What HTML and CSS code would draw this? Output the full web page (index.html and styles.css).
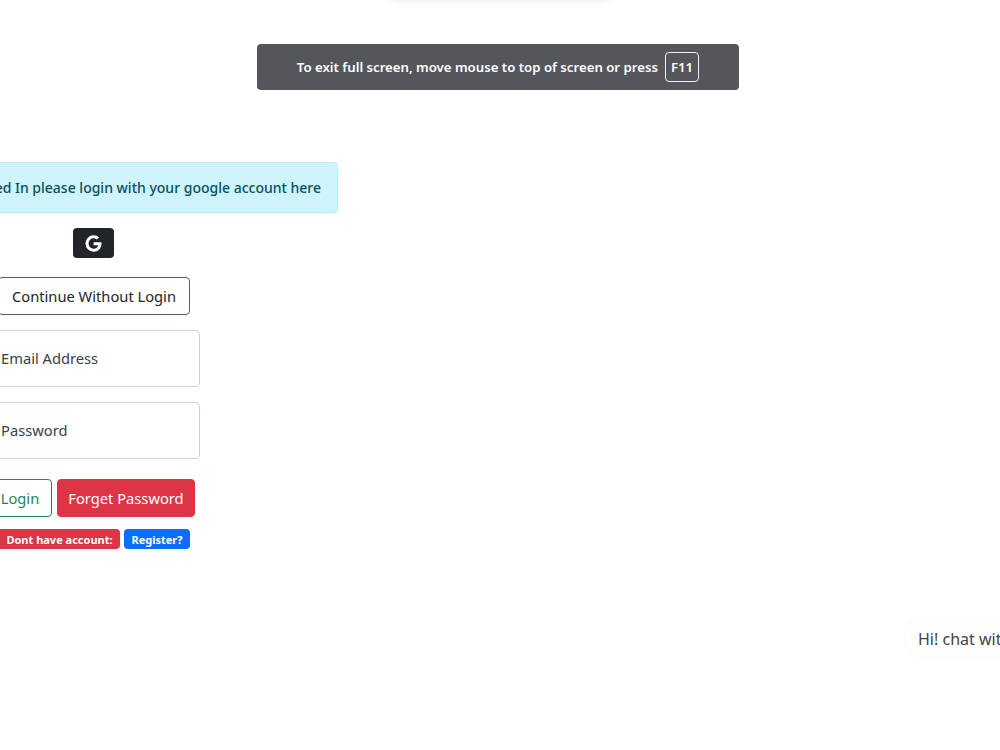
FILE: index.html
```html
<!DOCTYPE html>
<html lang="en">
<head>
    <meta charset="UTF-8">
    <title>Login</title>
    <link rel="stylesheet" href="styles.css">
</head>
<body>
<div class="top-shadow"></div>
<div class="fs-notice">
  <span>To exit full screen, move mouse to top of screen or press</span>
  <span class="key">F11</span>
</div>

<main class="login-col">
  <div class="alert-info">You are not Logged In please login with your google account here</div>

  <a class="btn-google" href="#" aria-label="Google">
    <svg width="17" height="17" viewBox="0 0 16 16">
      <path fill="#fff" d="M15.5 8.2c0 4.4-3 7.5-7.4 7.5A7.7 7.7 0 0 1 8.1.3c2.100 0 3.800.8 5.100 2l-2.100 2C8.400 1.700 3.400 3.700 3.400 8c0 2.700 2.100 4.900 4.700 4.900 3 0 4.200-2.200 4.400-3.300H8.100V6.900h7.300c.1.400.1.800.1 1.300z"/>
    </svg>
  </a>

  <button class="btn-outline">Continue Without Login</button>

  <form class="login-form">
    <div class="field">Email Address</div>
    <div class="field">Password</div>
    <div class="form-actions">
      <button type="button" class="btn-login">Login</button>
      <button type="button" class="btn-forget">Forget Password</button>
    </div>
    <div class="badges">
      <span class="badge badge-red">Dont have account:</span>
      <span class="badge badge-blue">Register?</span>
    </div>
  </form>
</main>

<div class="chat-bubble">Hi! chat with us</div>
</body>
</html>
```

FILE: styles.css
```css
* {
  box-sizing: border-box;
}

html, body {
  height: 100%;
}

body {
  margin: 0;
  overflow: hidden;
  position: relative;
  background: #fff;
  color: #212529;
  font-family: "Noto Sans", "Open Sans", sans-serif;
  font-size: 14.7px;
}

/* Browser full screen notice */
.top-shadow {
  position: absolute;
  top: -12px;
  left: 390px;
  width: 220px;
  height: 12px;
  border-radius: 8px;
  box-shadow: 0 1px 6px rgba(0,0,0,0.08);
}

.fs-notice {
  position: absolute;
  top: 44px;
  left: 257px;
  width: 482px;
  height: 46px;
  display: flex;
  align-items: center;
  justify-content: center;
  gap: 7px;
  background: #54565b;
  border-radius: 4px;
  color: #fff;
  font-size: 13.2px;
  font-weight: 600;
}

.key {
  border: 1px solid #f1f1f1;
  border-radius: 4px;
  padding: 5px;
  line-height: 18px;
}

/* Login column, runs off the left edge */
.login-col {
  width: 488px;
  margin-left: -150px;
  padding-top: 162px;
  display: flex;
  flex-direction: column;
  align-items: center;
}

.alert-info {
  width: 100%;
  height: 51px;
  padding: 0 16px;
  display: flex;
  align-items: center;
  justify-content: flex-end;
  white-space: nowrap;
  background: #cff4fc;
  border: 1px solid #b6effb;
  border-radius: 4px;
  color: #055160;
  font-size: 14px;
  font-weight: 500;
}

.btn-google {
  margin-top: 15px;
  margin-right: 1px;
  width: 41px;
  height: 30px;
  display: flex;
  align-items: center;
  justify-content: center;
  background: #212529;
  border-radius: 4px;
}

button {
  font-family: inherit;
  font-size: 14.7px;
  border-radius: 4px;
  cursor: pointer;
}

.btn-outline {
  margin-top: 19px;
  width: 192px;
  height: 38px;
  padding: 0;
  background: #fff;
  color: #212529;
  border: 1px solid #555b61;
}

.login-form {
  margin-top: 15px;
  width: 212px;
  display: flex;
  flex-direction: column;
}

.field {
  height: 57px;
  margin-bottom: 15px;
  padding: 0 0 2px 12px;
  display: flex;
  align-items: center;
  background: #fff;
  border: 1px solid #ced4da;
  border-radius: 4px;
  color: #3b4046;
}

.form-actions {
  margin-top: 5px;
  display: flex;
  gap: 5px;
}

.btn-login {
  width: 64px;
  height: 38px;
  background: #fff;
  color: #198754;
  border: 1px solid #198754;
  padding: 0;
}

.btn-forget {
  width: 138px;
  height: 38px;
  padding: 0;
  background: #dc3545;
  color: #fff;
  border: 1px solid #dc3545;
}

.badges {
  margin-top: 12px;
  display: flex;
  gap: 4px;
}

.badge {
  height: 20px;
  display: flex;
  align-items: center;
  justify-content: center;
  color: #fff;
  border-radius: 4px;
  font-size: 11px;
  font-weight: 700;
}

.badge-red {
  width: 132px;
  padding-left: 11px;
  background: #dc3545;
}

.badge-blue {
  width: 66px;
  background: #0d6efd;
}

/* Chat bubble, cut off by the right edge */
.chat-bubble {
  position: absolute;
  top: 618px;
  left: 906px;
  width: 140px;
  height: 38px;
  padding: 3px 0 0 12px;
  display: flex;
  align-items: center;
  white-space: nowrap;
  background: #fff;
  border-radius: 16px;
  box-shadow: 0 0 3px rgba(0,0,0,0.06);
  color: #444;
  font-size: 16px;
}
```
